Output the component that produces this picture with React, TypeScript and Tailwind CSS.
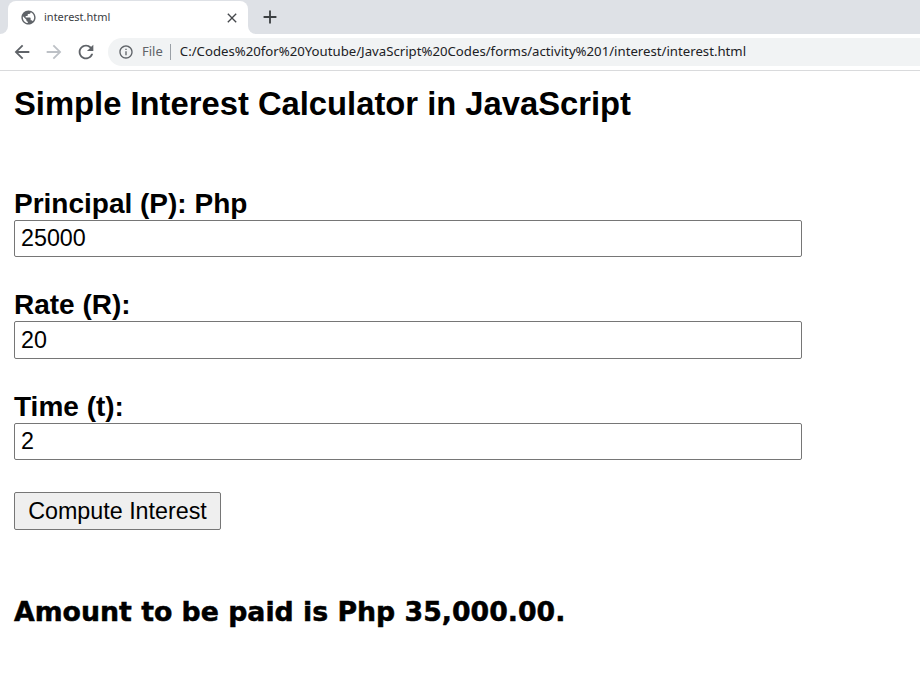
function Icon({ d, size, className }: { d: string; size: number; className: string }) {
  return (
    <svg viewBox="0 0 24 24" width={size} height={size} fill="currentColor" className={`shrink-0 ${className}`}>
      <path d={d} />
    </svg>
  );
}

const GLOBE =
  "M12 2C6.48 2 2 6.48 2 12s4.48 10 10 10 10-4.48 10-10S17.52 2 12 2zm-1 17.93c-3.95-.49-7-3.85-7-7.93 0-.62.08-1.21.21-1.79L9 15v1c0 1.1.9 2 2 2v1.93zm6.9-2.54c-.26-.81-1-1.39-1.9-1.39h-1v-3c0-.55-.45-1-1-1H8v-2h2c.55 0 1-.45 1-1V7h2c1.1 0 2-.9 2-2v-.41c2.93 1.19 5 4.06 5 7.41 0 2.08-.8 3.97-2.1 5.39z";
const CLOSE = "M19 6.41L17.59 5 12 10.59 6.41 5 5 6.41 10.59 12 5 17.59 6.41 19 12 13.41 17.59 19 19 17.59 13.41 12z";
const PLUS = "M19 13h-6v6h-2v-6H5v-2h6V5h2v6h6v2z";
const BACK = "M20 11H7.83l5.59-5.59L12 4l-8 8 8 8 1.41-1.41L7.83 13H20v-2z";
const FORWARD = "M12 4l-1.41 1.41L16.17 11H4v2h12.17l-5.58 5.59L12 20l8-8z";
const REFRESH =
  "M17.65 6.35A7.958 7.958 0 0012 4c-4.42 0-7.99 3.58-7.99 8s3.57 8 7.99 8c3.73 0 6.84-2.55 7.73-6h-2.08A5.99 5.99 0 0112 18c-3.31 0-6-2.69-6-6s2.69-6 6-6c1.66 0 3.14.69 4.22 1.78L13 11h7V4l-2.35 2.35z";
const INFO =
  "M11 7h2v2h-2zm0 4h2v6h-2zm1-9C6.48 2 2 6.48 2 12s4.48 10 10 10 10-4.48 10-10S17.52 2 12 2zm0 18c-4.41 0-8-3.59-8-8s3.59-8 8-8 8 3.59 8 8-3.59 8-8 8z";

function Field({ label, value }: { label: string; value: string }) {
  return (
    <div className="flex flex-col">
      <label className="text-[28px] font-bold leading-[32px] text-black">{label}</label>
      <input
        readOnly
        value={value}
        className="h-[37.4px] w-[788px] rounded-[2px] border border-[#767676] bg-white px-[6px] text-[23.3px] text-black outline-none"
      />
    </div>
  );
}

export default function App() {
  return (
    <div className="h-[681px] w-[920px] overflow-hidden bg-white font-['Liberation_Sans',Arial,sans-serif]">
      {/* Tab strip */}
      <div className="flex h-[34px] bg-white">
        <div className="w-2 rounded-br-lg bg-[#dee1e6]" />
        <div className="w-[240px] bg-[#dee1e6] pt-px">
          <div className="flex h-full items-center rounded-t-lg bg-white pl-[12px] pr-[8px]">
            <Icon d={GLOBE} size={17} className="text-[#5f6368]" />
            <span className="ml-[7px] flex-1 font-['Noto_Sans',sans-serif] text-[11px] text-[#3c4043]">interest.html</span>
            <Icon d={CLOSE} size={16} className="text-[#45484c]" />
          </div>
        </div>
        <div className="flex-1 rounded-bl-lg bg-[#dee1e6] pl-[11px] pt-[6px]">
          <Icon d={PLUS} size={22} className="text-[#3c4043]" />
        </div>
      </div>
      {/* Toolbar */}
      <div className="flex h-[37px] items-center border-b border-[#d9dadc] bg-white pl-[11px]">
        <Icon d={BACK} size={22} className="text-[#5f6368]" />
        <Icon d={FORWARD} size={22} className="ml-[10px] text-[#bdc1c6]" />
        <Icon d={REFRESH} size={22} className="ml-[10px] text-[#5f6368]" />
        <div className="ml-[11px] flex h-[28px] flex-1 items-center rounded-l-full bg-[#f1f3f4] pl-[10px]">
          <Icon d={INFO} size={16} className="text-[#5f6368]" />
          <span className="ml-[8px] font-['Noto_Sans',sans-serif] text-[13px] text-[#5f6368]">File</span>
          <span className="ml-[7px] mr-[9px] h-[16px] w-px bg-[#9aa0a6]" />
          <span className="font-['Noto_Sans',sans-serif] text-[13.2px] text-[#202124]">
            C:/Codes%20for%20Youtube/JavaScript%20Codes/forms/activity%201/interest/interest.html
          </span>
        </div>
      </div>
      {/* Page */}
      <div className="px-[14px]">
        <h1 className="mt-[14px] text-[32.75px] font-bold leading-[37px] text-black">
          Simple Interest Calculator in JavaScript
        </h1>
        <div className="mt-[66px] flex flex-col gap-[32px]">
          <Field label="Principal (P): Php" value="25000" />
          <Field label="Rate (R):" value="20" />
          <Field label="Time (t):" value="2" />
        </div>
        <button className="mt-[31.8px] h-[38px] w-[207px] rounded-[2px] border border-[#767676] bg-[#efefef] pt-px text-[23.3px] text-black">
          Compute Interest
        </button>
        <p className="mt-[65px] font-['DejaVu_Sans',sans-serif] text-[26.75px] font-bold leading-[33px] text-black [-webkit-text-stroke:0.5px_black]">
          Amount to be paid is Php 35,000.00.
        </p>
      </div>
    </div>
  );
}
